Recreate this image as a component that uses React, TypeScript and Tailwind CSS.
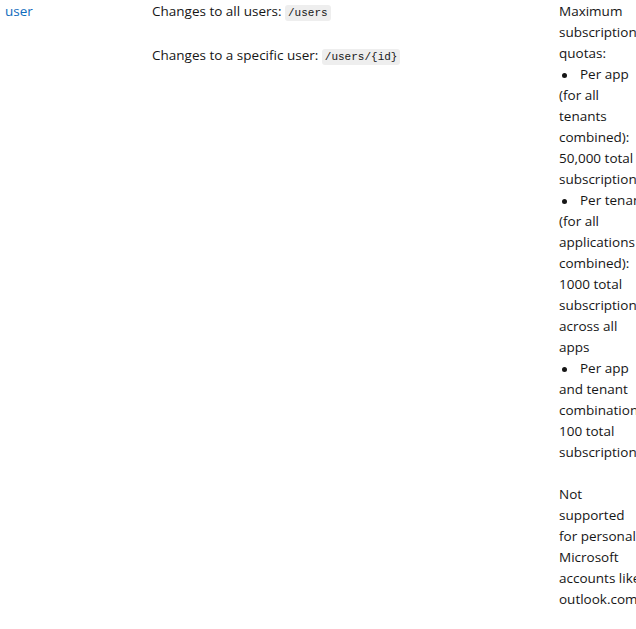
export default function App() {
  const code = 'rounded-[3px] bg-[#eeeeee] px-[3px] py-[2px] font-["Liberation_Mono",monospace] text-[11px] text-[#171717]';
  const dot = <span className="mr-[13px] ml-[3px] inline-block h-[5px] w-[5px] rounded-full bg-[#161616] align-middle" />;
  return (
    <div className="h-[629px] w-[636px] overflow-hidden bg-white font-['Open_Sans','Noto_Sans',sans-serif] text-[13.5px] leading-[21px] text-[#161616]">
      <div className="flex w-[720px] items-start pt-px">
        <div className="w-[152px] shrink-0 pl-[5px]">
          <a href="#" className="text-[#0f6cbd]">user</a>
        </div>
        <div className="w-[407px] shrink-0">
          <p>
            Changes to all users: <code className={code}>/users</code>
          </p>
          <br />
          <p>
            Changes to a specific user: <code className={code}>/users/{'{id}'}</code>
          </p>
        </div>
        <div className="w-[87px] shrink-0 whitespace-normal">
          Maximum subscription quotas:
          <br />
          {dot}Per app (for all tenants combined): 50,000 total subscriptions
          <br />
          {dot}Per tenant (for all applications combined): 1000 total subscriptions across all apps
          <br />
          {dot}Per app and tenant combination: 100 total subscriptions
          <br />
          <br />
          Not supported for personal Microsoft accounts like outlook.com.
        </div>
      </div>
    </div>
  );
}
